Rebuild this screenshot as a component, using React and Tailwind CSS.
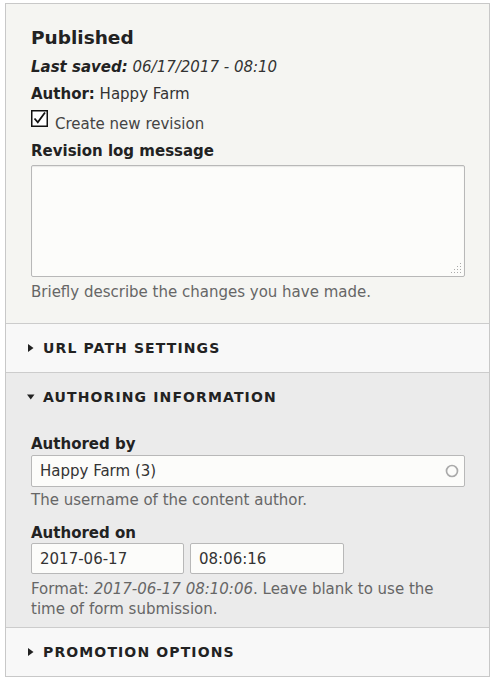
// App.jsx
const font = { fontFamily: '"DejaVu Sans", Verdana, sans-serif' };

const Triangle = ({ open }) => (
  <svg width="8" height="8" viewBox="0 0 8 8" className="shrink-0">
    {open ? <path d="M0 1.5 L7.5 1.5 L3.75 6.5 Z" fill="#222" /> : <path d="M1 0 L6.5 4 L1 8 Z" fill="#222" />}
  </svg>
);

const Summary = ({ open, label }) => (
  <div className="flex items-center gap-[8px] pl-[21px] h-[48px]">
    <Triangle open={open} />
    <span className="text-[14px] font-bold uppercase tracking-[0.08em] text-[#222]">{label}</span>
  </div>
);

const Grip = () => (
  <svg width="12" height="12" viewBox="0 0 12 12" className="absolute right-[2px] bottom-[2px]">
    {[[10, 2], [7, 5], [10, 5], [4, 8], [7, 8], [10, 8], [1, 11], [4, 11], [7, 11], [10, 11]].map(([x, y]) => (
      <rect key={`${x}-${y}`} x={x} y={y - 1} width="1" height="1" fill="#aaa" />
    ))}
  </svg>
);

const App = () => (
  <div className="bg-white min-h-[678px] pt-[3px] pl-[5px] pr-[3px]" style={font}>
    <div className="border border-[#c8c8c8] w-[485px] text-[#333] text-[15px] leading-[20px]">
      <div className="bg-[#f5f5f2] px-[25px] pt-[22px] pb-[21px]">
        <h2 className="text-[18.5px] font-bold text-[#222] leading-[24px]">Published</h2>
        <p className="italic mt-[7px]">
          <span className="font-bold text-[#222]">Last saved:</span> 06/17/2017 - 08:10
        </p>
        <p className="mt-[7px]">
          <span className="font-bold text-[#222]">Author:</span> Happy Farm
        </p>
        <label className="flex items-start gap-[7px] mt-[6px]">
          <svg width="17" height="17" viewBox="0 0 17 17" className="shrink-0">
            <rect x="0.75" y="0.75" width="15.5" height="15.5" fill="#fff" stroke="#111" strokeWidth="1.5" />
            <path d="M3.5 8.5 L6.8 12.3 L14 2.5" fill="none" stroke="#111" strokeWidth="1.8" />
          </svg>
          <span className="mt-[4px] text-[#444]">Create new revision</span>
        </label>
        <p className="font-bold text-[#222] mt-[7px]">Revision log message</p>
        <div className="relative mt-[4px] h-[112px] w-[434px] bg-[#fcfcfa] border border-[#b8b8b8] rounded-[2px] shadow-[inset_0_1px_1px_rgba(0,0,0,0.08)]">
          <Grip />
        </div>
        <p className="text-[#666] mt-[5px]">Briefly describe the changes you have made.</p>
      </div>
      <div className="bg-[#f8f8f8] border-t border-[#ccc]">
        <Summary label="URL path settings" />
      </div>
      <div className="bg-[#ebebeb] border-t border-[#ccc] pb-[8px]">
        <Summary open label="Authoring information" />
        <div className="px-[25px] pt-[13px]">
          <p className="font-bold text-[#222]">Authored by</p>
          <div className="mt-[1px] h-[32px] w-[434px] bg-[#fcfcfa] border border-[#b8b8b8] rounded-[2px] flex items-center justify-between pl-[8px] pr-[5px]">
            <span className="text-[#333]">Happy Farm (3)</span>
            <svg width="14" height="14" viewBox="0 0 14 14">
              <circle cx="7" cy="7" r="5.5" fill="none" stroke="#aaa" strokeWidth="1.7" />
            </svg>
          </div>
          <p className="text-[#666] mt-[3px]">The username of the content author.</p>
          <p className="font-bold text-[#222] mt-[13px]">Authored on</p>
          <div className="flex gap-[6px]">
            <div className="h-[31px] w-[153px] bg-[#fcfcfa] border border-[#b8b8b8] rounded-[2px] flex items-center px-[8px]">2017-06-17</div>
            <div className="h-[31px] w-[154px] bg-[#fcfcfa] border border-[#b8b8b8] rounded-[2px] flex items-center px-[8px]">08:06:16</div>
          </div>
          <p className="text-[#666] mt-[5px]">
            Format: <em>2017-06-17 08:10:06</em>. Leave blank to use the time of form submission.
          </p>
        </div>
      </div>
      <div className="bg-[#f8f8f8] border-t border-[#ccc]">
        <Summary label="Promotion options" />
      </div>
    </div>
  </div>
);

export default App;
